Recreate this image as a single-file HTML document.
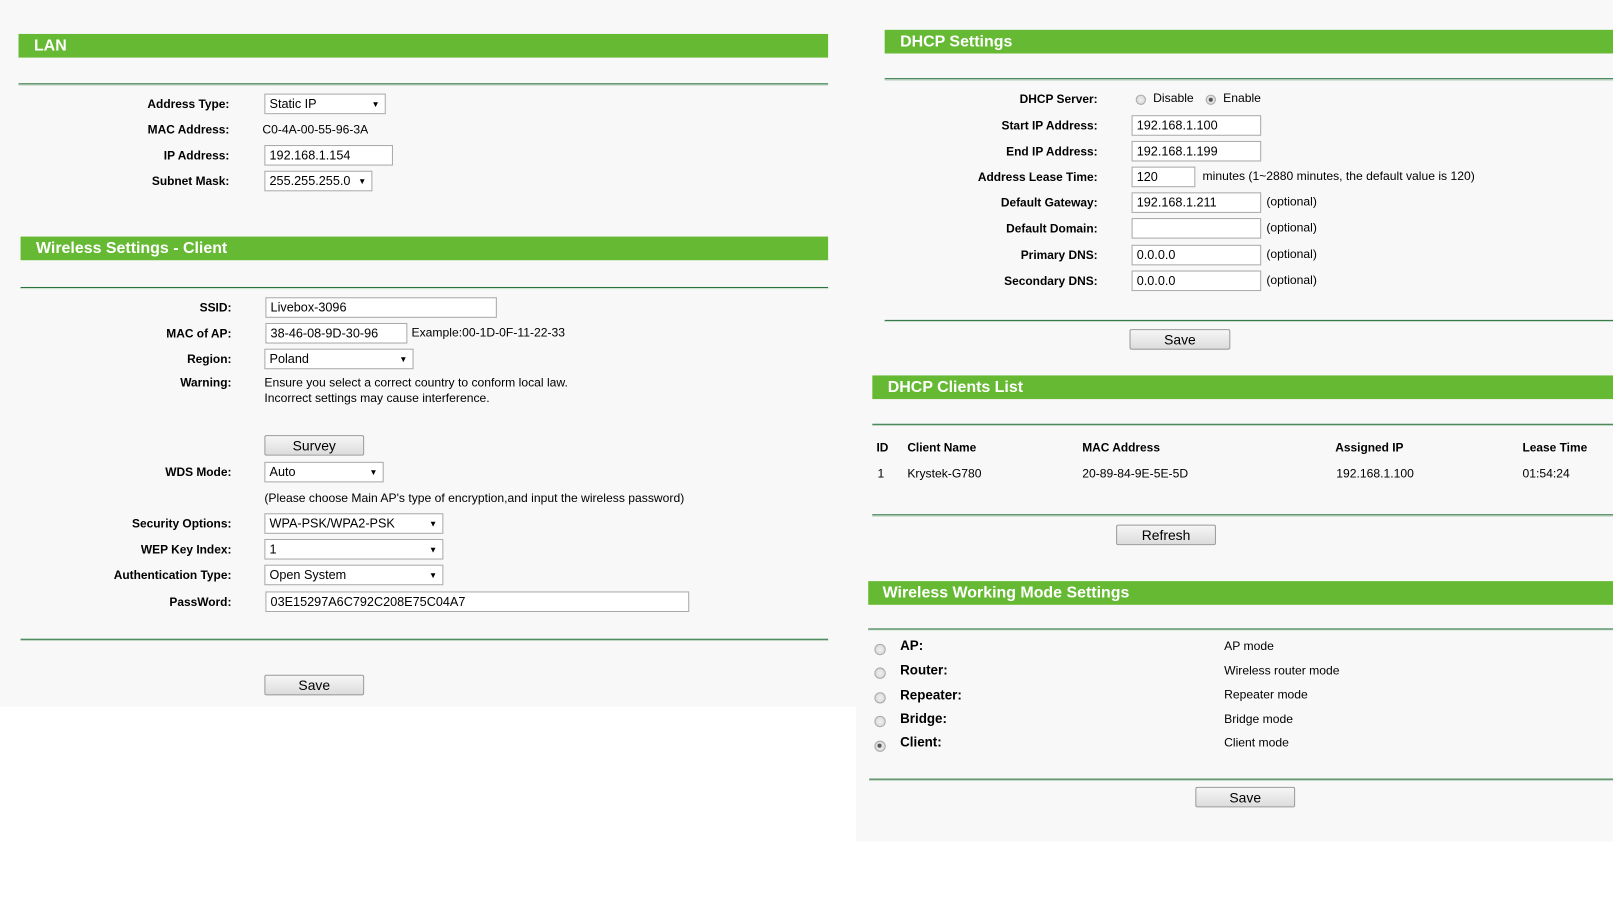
<!DOCTYPE html>
<html><head><meta charset="utf-8"><style>
html,body{margin:0;padding:0;background:#fff;width:1613px;height:900px;overflow:hidden}
#w{position:absolute;left:0;top:0;width:1568px;height:875px;transform:scale(1.02870,1.02857);transform-origin:0 0;font-family:"Liberation Sans",Arial,sans-serif;color:#000}
.bg{position:absolute;background:#f8f8f8}
.bar{position:absolute;background:#66b933;color:#fff;font-weight:bold;font-size:15.5px;height:23px;line-height:23px;box-sizing:border-box}
.ln{position:absolute;height:1px;background:#2a7340;border-bottom:1px solid #d3e3d3}
.t{position:absolute;font-size:11.8px;line-height:15px;white-space:nowrap}
.lb{position:absolute;font-size:11.6px;line-height:15px;white-space:nowrap;font-weight:bold;text-align:right}
.b{position:absolute;background:#fff;border:1px solid #a9a9a9;box-sizing:border-box;font-size:12.3px;padding-left:4px;line-height:19px;height:20px;white-space:nowrap}
.s:after{content:"▼";position:absolute;right:5px;top:0;font-size:8px}
.btn{position:absolute;height:20px;box-sizing:border-box;border:1px solid #9a9a9a;border-radius:2px;background:linear-gradient(#f6f6f6,#dcdcdc);font-size:13.5px;text-align:center;line-height:19px}
.r{position:absolute;width:10px;height:10px;border-radius:50%;border:1px solid #a8a8a8;background:radial-gradient(#f0f0f0,#d4d4d4);box-sizing:border-box}
.r.on:after{content:"";position:absolute;left:2px;top:2px;width:4px;height:4px;border-radius:50%;background:#555}
</style></head><body><div id="w">
<div class="bg" style="left:0;top:0;width:1568px;height:687px"></div>
<div class="bg" style="left:832px;top:0;width:736px;height:818px"></div>

<!-- LEFT -->
<div class="bar" style="left:18px;top:33px;width:787px;padding-left:15px">LAN</div>
<div class="ln" style="left:18px;top:81px;width:787px"></div>
<div class="lb" style="right:1345px;top:94px">Address Type:</div>
<div class="b s" style="left:257px;top:91px;width:118px">Static IP</div>
<div class="lb" style="right:1345px;top:119px">MAC Address:</div>
<div class="t" style="left:255px;top:119px">C0-4A-00-55-96-3A</div>
<div class="lb" style="right:1345px;top:144px">IP Address:</div>
<div class="b" style="left:257px;top:141px;width:125px">192.168.1.154</div>
<div class="lb" style="right:1345px;top:169px">Subnet Mask:</div>
<div class="b s" style="left:257px;top:166px;width:105px">255.255.255.0</div>

<div class="bar" style="left:20px;top:230px;width:785px;padding-left:15px">Wireless Settings - Client</div>
<div class="ln" style="left:20px;top:279px;width:785px"></div>
<div class="lb" style="right:1343px;top:292px">SSID:</div>
<div class="b" style="left:258px;top:289px;width:225px">Livebox-3096</div>
<div class="lb" style="right:1343px;top:317px">MAC of AP:</div>
<div class="b" style="left:258px;top:314px;width:138px">38-46-08-9D-30-96</div>
<div class="t" style="left:400px;top:316px">Example:00-1D-0F-11-22-33</div>
<div class="lb" style="right:1343px;top:342px">Region:</div>
<div class="b s" style="left:257px;top:339px;width:145px">Poland</div>
<div class="lb" style="right:1343px;top:365px">Warning:</div>
<div class="t" style="left:257px;top:365px">Ensure you select a correct country to conform local law.</div>
<div class="t" style="left:257px;top:380px">Incorrect settings may cause interference.</div>
<div class="btn" style="left:257px;top:423px;width:97px">Survey</div>
<div class="lb" style="right:1343px;top:452px">WDS Mode:</div>
<div class="b s" style="left:257px;top:449px;width:116px">Auto</div>
<div class="t" style="left:257px;top:477px">(Please choose Main AP's type of encryption,and input the wireless password)</div>
<div class="lb" style="right:1343px;top:502px">Security Options:</div>
<div class="b s" style="left:257px;top:499px;width:174px">WPA-PSK/WPA2-PSK</div>
<div class="lb" style="right:1343px;top:527px">WEP Key Index:</div>
<div class="b s" style="left:257px;top:524px;width:174px">1</div>
<div class="lb" style="right:1343px;top:552px">Authentication Type:</div>
<div class="b s" style="left:257px;top:549px;width:174px">Open System</div>
<div class="lb" style="right:1343px;top:578px">PassWord:</div>
<div class="b" style="left:258px;top:575px;width:412px">03E15297A6C792C208E75C04A7</div>
<div class="ln" style="left:20px;top:621px;width:785px"></div>
<div class="btn" style="left:257px;top:656px;width:97px">Save</div>

<!-- RIGHT -->
<div class="bar" style="left:860px;top:29px;width:708px;padding-left:15px">DHCP Settings</div>
<div class="ln" style="left:860px;top:76px;width:708px"></div>
<div class="lb" style="right:501px;top:89px">DHCP Server:</div>
<div class="r" style="left:1104px;top:92px"></div>
<div class="t" style="left:1121px;top:88px">Disable</div>
<div class="r on" style="left:1172px;top:92px"></div>
<div class="t" style="left:1189px;top:88px">Enable</div>
<div class="lb" style="right:501px;top:115px">Start IP Address:</div>
<div class="b" style="left:1100px;top:112px;width:126px">192.168.1.100</div>
<div class="lb" style="right:501px;top:140px">End IP Address:</div>
<div class="b" style="left:1100px;top:137px;width:126px">192.168.1.199</div>
<div class="lb" style="right:501px;top:165px">Address Lease Time:</div>
<div class="b" style="left:1100px;top:162px;width:62px">120</div>
<div class="t" style="left:1169px;top:164px">minutes (1~2880 minutes, the default value is 120)</div>
<div class="lb" style="right:501px;top:190px">Default Gateway:</div>
<div class="b" style="left:1100px;top:187px;width:126px">192.168.1.211</div>
<div class="t" style="left:1231px;top:189px">(optional)</div>
<div class="lb" style="right:501px;top:215px">Default Domain:</div>
<div class="b" style="left:1100px;top:212px;width:126px"></div>
<div class="t" style="left:1231px;top:214px">(optional)</div>
<div class="lb" style="right:501px;top:241px">Primary DNS:</div>
<div class="b" style="left:1100px;top:238px;width:126px">0.0.0.0</div>
<div class="t" style="left:1231px;top:240px">(optional)</div>
<div class="lb" style="right:501px;top:266px">Secondary DNS:</div>
<div class="b" style="left:1100px;top:263px;width:126px">0.0.0.0</div>
<div class="t" style="left:1231px;top:265px">(optional)</div>
<div class="ln" style="left:860px;top:311px;width:708px"></div>
<div class="btn" style="left:1098px;top:320px;width:98px">Save</div>

<div class="bar" style="left:848px;top:365px;width:720px;padding-left:15px">DHCP Clients List</div>
<div class="ln" style="left:848px;top:412px;width:720px"></div>
<div class="lb" style="left:852px;top:428px;text-align:left">ID</div>
<div class="lb" style="left:882px;top:428px;text-align:left">Client Name</div>
<div class="lb" style="left:1052px;top:428px;text-align:left">MAC Address</div>
<div class="lb" style="left:1298px;top:428px;text-align:left">Assigned IP</div>
<div class="lb" style="left:1480px;top:428px;text-align:left">Lease Time</div>
<div class="t" style="left:853px;top:453px">1</div>
<div class="t" style="left:882px;top:453px">Krystek-G780</div>
<div class="t" style="left:1052px;top:453px">20-89-84-9E-5E-5D</div>
<div class="t" style="left:1299px;top:453px">192.168.1.100</div>
<div class="t" style="left:1480px;top:453px">01:54:24</div>
<div class="ln" style="left:848px;top:500px;width:720px"></div>
<div class="btn" style="left:1085px;top:510px;width:97px">Refresh</div>

<div class="bar" style="left:844px;top:565px;width:724px;padding-left:14px">Wireless Working Mode Settings</div>
<div class="ln" style="left:844px;top:611px;width:724px"></div>
<div class="r" style="left:850px;top:626px;width:11px;height:11px"></div>
<div class="lb" style="left:875px;top:620px;font-size:13px;text-align:left">AP:</div>
<div class="t" style="left:1190px;top:621px">AP mode</div>
<div class="r" style="left:850px;top:649px;width:11px;height:11px"></div>
<div class="lb" style="left:875px;top:644px;font-size:13px;text-align:left">Router:</div>
<div class="t" style="left:1190px;top:645px">Wireless router mode</div>
<div class="r" style="left:850px;top:673px;width:11px;height:11px"></div>
<div class="lb" style="left:875px;top:668px;font-size:13px;text-align:left">Repeater:</div>
<div class="t" style="left:1190px;top:668px">Repeater mode</div>
<div class="r" style="left:850px;top:696px;width:11px;height:11px"></div>
<div class="lb" style="left:875px;top:691px;font-size:13px;text-align:left">Bridge:</div>
<div class="t" style="left:1190px;top:692px">Bridge mode</div>
<div class="r on" style="left:850px;top:720px;width:11px;height:11px"></div>
<div class="lb" style="left:875px;top:714px;font-size:13px;text-align:left">Client:</div>
<div class="t" style="left:1190px;top:715px">Client mode</div>
<div class="ln" style="left:845px;top:757px;width:723px"></div>
<div class="btn" style="left:1162px;top:765px;width:97px">Save</div>
</div></body></html>
